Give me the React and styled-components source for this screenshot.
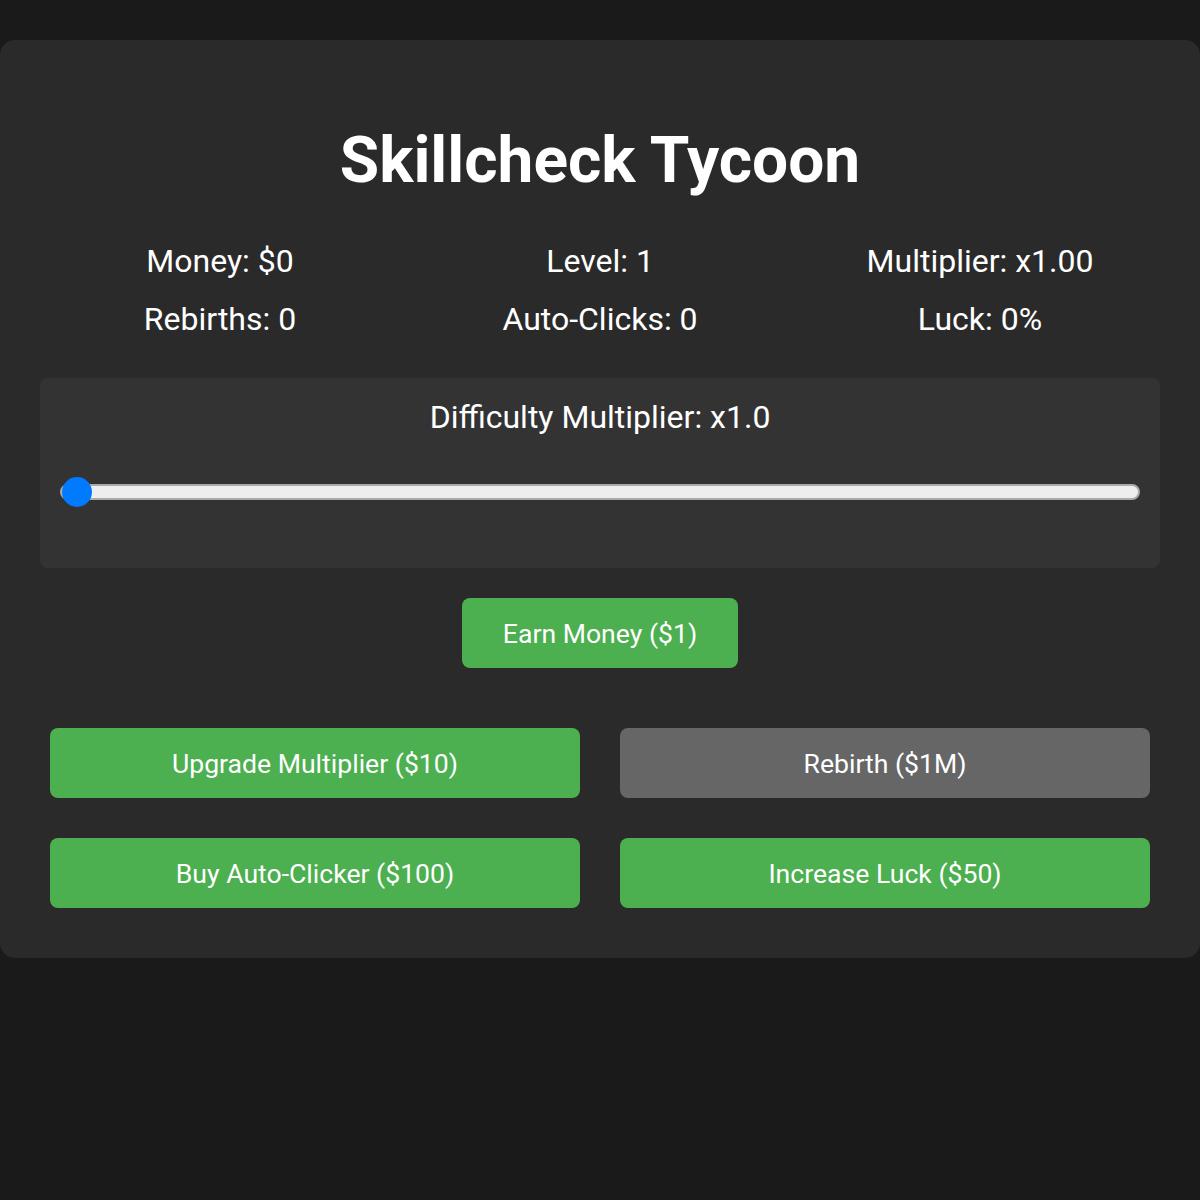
import React, { useState } from "react";
import styled, { createGlobalStyle } from "styled-components";

const GlobalStyle = createGlobalStyle`
  html, body {
    margin: 0;
    padding: 0;
    background-color: #1a1a1a;
    font-family: Roboto, "Liberation Sans", Arial, sans-serif;
    color: #fff;
  }
  body {
    padding-top: 40px;
    min-height: 1200px;
    box-sizing: border-box;
  }
`;

const Container = styled.div`
  max-width: 1200px;
  margin: 0 auto;
  padding: 40px;
  box-sizing: border-box;
  background-color: #2a2a2a;
  border-radius: 15px;
  text-align: center;
`;

const Title = styled.h1`
  font-size: 64px;
  font-weight: 700;
  margin: 43px 0 44px;
`;

const Stats = styled.div`
  display: grid;
  grid-template-columns: repeat(3, 1fr);
  gap: 20px;
  margin-bottom: 40px;
  font-size: 32px;
`;

const Stat = styled.div``;

const DifficultyPanel = styled.div`
  background-color: #333;
  border-radius: 8px;
  padding: 20px 20px 68px;
  margin-bottom: 30px;
`;

const DifficultyLabel = styled.div`
  font-size: 32px;
  margin-bottom: 48px;
`;

const Slider = styled.input`
  -webkit-appearance: none;
  appearance: none;
  display: block;
  width: 100%;
  height: 16px;
  margin: 0;
  background: #eee;
  border: 2px solid #aaa;
  border-radius: 8px;
  box-sizing: border-box;
  outline: none;

  &::-webkit-slider-thumb {
    -webkit-appearance: none;
    appearance: none;
    width: 30px;
    height: 30px;
    border-radius: 50%;
    background: #007bff;
    border: none;
    cursor: pointer;
  }
`;

const Button = styled.button`
  display: block;
  font-family: inherit;
  font-size: 26.6px;
  color: #fff;
  background-color: ${props => props.disabled ? '#666' : '#4caf50'};
  border: none;
  border-radius: 8px;
  height: 70px;
  padding: 0 41px;
  margin: 10px auto;
  cursor: ${props => props.disabled ? 'not-allowed' : 'pointer'};
`;

const UpgradeGrid = styled.div`
  display: grid;
  grid-template-columns: repeat(2, 1fr);
  gap: 20px;
  margin-top: 50px;

  ${Button} {
    width: calc(100% - 20px);
    margin: 10px;
  }
`;

export default function App() {
  const [difficulty, setDifficulty] = useState(1);

  return (
    <>
      <GlobalStyle />
      <Container>
        <Title>Skillcheck Tycoon</Title>
        <Stats>
          <Stat>Money: $0</Stat>
          <Stat>Level: 1</Stat>
          <Stat>Multiplier: x1.00</Stat>
          <Stat>Rebirths: 0</Stat>
          <Stat>Auto-Clicks: 0</Stat>
          <Stat>Luck: 0%</Stat>
        </Stats>
        <DifficultyPanel>
          <DifficultyLabel>Difficulty Multiplier: x{difficulty.toFixed(1)}</DifficultyLabel>
          <Slider
            type="range"
            min="1"
            max="10"
            step="0.1"
            value={difficulty}
            onChange={e => setDifficulty(parseFloat(e.target.value))}
          />
        </DifficultyPanel>
        <Button>Earn Money ($1)</Button>
        <UpgradeGrid>
          <Button>Upgrade Multiplier ($10)</Button>
          <Button disabled>Rebirth ($1M)</Button>
          <Button>Buy Auto-Clicker ($100)</Button>
          <Button>Increase Luck ($50)</Button>
        </UpgradeGrid>
      </Container>
    </>
  );
}
